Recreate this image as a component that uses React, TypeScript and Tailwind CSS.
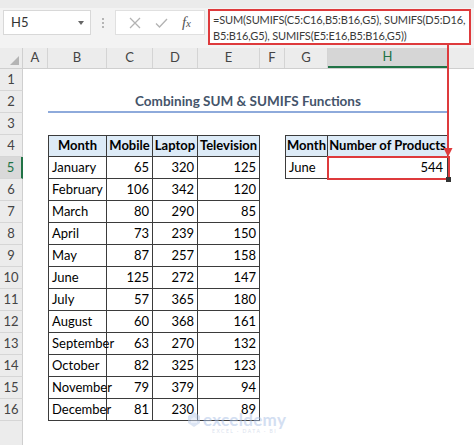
import React from 'react';

type Row = [string, number, number, number];

const data: Row[] = [
  ['January', 65, 320, 125],
  ['February', 106, 342, 120],
  ['March', 80, 290, 85],
  ['April', 73, 239, 150],
  ['May', 87, 257, 158],
  ['June', 125, 272, 147],
  ['July', 57, 365, 180],
  ['August', 60, 368, 161],
  ['September', 63, 270, 132],
  ['October', 82, 325, 123],
  ['November', 79, 379, 94],
  ['December', 81, 230, 89],
];

// column widths (A..H), the rest of the row is column I
const W = {
  A: 'w-[25px]',
  B: 'w-[59px]',
  C: 'w-[46px]',
  D: 'w-[45px]',
  E: 'w-[62px]',
  F: 'w-[25px]',
  G: 'w-[43px]',
  H: 'w-[120px]',
};

const colHeaders: { key: string; w: string }[] = [
  { key: 'A', w: W.A },
  { key: 'B', w: W.B },
  { key: 'C', w: W.C },
  { key: 'D', w: W.D },
  { key: 'E', w: W.E },
  { key: 'F', w: W.F },
  { key: 'G', w: W.G },
  { key: 'H', w: W.H },
];

const border = 'border-r border-b border-[#3b3b3b]';

function RowHeader({ n }: { n: number }) {
  const selected = n === 5;
  return (
    <div
      className={`w-[23px] shrink-0 flex items-center justify-center border-b border-[#d6d6d6] text-[13px] ${
        selected
          ? 'bg-[#d9d9d9] border-r-2 border-r-[#217346] text-[#217346]'
          : 'bg-[#ececec] border-r border-r-[#cfcfcf] text-[#444]'
      }`}
    >
      {n}
    </div>
  );
}

function Blank({ w }: { w: string }) {
  return <div className={`${w} shrink-0`} />;
}

function SheetRow({ n, children }: { n: number; children?: React.ReactNode }) {
  return (
    <div className="flex h-[22px]">
      <RowHeader n={n} />
      <Blank w={W.A} />
      {children}
    </div>
  );
}

export default function App() {
  return (
    <div
      className="relative w-[474px] h-[445px] overflow-hidden bg-white text-black"
      style={{ fontFamily: 'Lato, "Liberation Sans", sans-serif' }}
    >
      {/* formula bar */}
      <div className="h-[48px] bg-[#f3f3f3] border-t-[8px] border-[#ebebeb] flex items-start pt-[1px]">
        <div className="ml-[3px] mt-[1px] w-[88px] h-[25px] bg-white border border-[#d8d8d8] flex items-center justify-between pl-[7px] pr-[6px]">
          <span className="text-[13px] text-[#333]">H5</span>
          <span className="w-0 h-0 border-l-[3px] border-r-[3px] border-t-[4px] border-l-transparent border-r-transparent border-t-[#666]" />
        </div>
        <div className="w-[24px] h-[25px] flex flex-col items-center justify-center gap-[2px] mt-[1px]">
          <span className="w-[2px] h-[2px] bg-[#b5b5b5]" />
          <span className="w-[2px] h-[2px] bg-[#b5b5b5]" />
          <span className="w-[2px] h-[2px] bg-[#b5b5b5]" />
        </div>
        <div className="w-[90px] h-[25px] mt-[1px] bg-white border border-[#e0e0e0] flex items-center justify-around px-[6px]">
          <svg width="12" height="12" viewBox="0 0 12 12">
            <path d="M1 1 L11 11 M11 1 L1 11" stroke="#b3b3b3" strokeWidth="1.3" fill="none" />
          </svg>
          <svg width="13" height="12" viewBox="0 0 13 12">
            <path d="M1 6.5 L4.5 10 L12 2" stroke="#b3b3b3" strokeWidth="1.3" fill="none" />
          </svg>
          <span
            className="text-[15px] italic text-[#555] leading-none"
            style={{ fontFamily: '"Liberation Serif", serif' }}
          >
            f<span className="text-[11px]">x</span>
          </span>
        </div>
        <div className="ml-[3px] w-[263px] h-[36px] bg-white border-2 border-[#de3a3c] pl-[3px] pt-[1px] text-[11px] leading-[16px] text-[#3a3a3a] tracking-[-0.15px] overflow-hidden">
          <div className="whitespace-nowrap">=SUM(SUMIFS(C5:C16,B5:B16,G5), SUMIFS(D5:D16,</div>
          <div className="whitespace-nowrap">B5:B16,G5), SUMIFS(E5:E16,B5:B16,G5))</div>
        </div>
      </div>

      {/* column headers */}
      <div className="flex h-[21px] bg-[#ececec] text-[13px] text-[#444] border-b border-[#cfcfcf]">
        <div className="w-[23px] shrink-0 relative border-r border-[#cfcfcf]">
          <span
            className="absolute right-[3px] bottom-[3px] w-0 h-0"
            style={{ borderBottom: '9px solid #b4b4b4', borderLeft: '9px solid transparent' }}
          />
        </div>
        {colHeaders.map((c) => (
          <div
            key={c.key}
            className={`${c.w} shrink-0 flex items-center justify-center border-r border-[#d4d4d4] ${
              c.key === 'H' ? 'bg-[#d6d6d6] border-b-2 border-b-[#217346] text-[#217346]' : ''
            }`}
          >
            {c.key}
          </div>
        ))}
        <div className="flex-1" />
      </div>

      {/* sheet */}
      <div className="text-[13px]">
        <SheetRow n={1} />
        <SheetRow n={2}>
          <div className="w-[400px] shrink-0 flex items-center justify-center border-b-2 border-[#8eaadb] font-bold text-[13.5px] text-[#44546a]">
            Combining SUM &amp; SUMIFS Functions
          </div>
        </SheetRow>
        <SheetRow n={3} />
        <SheetRow n={4}>
          {[
            ['Month', W.B, 'border-l'],
            ['Mobile', W.C, ''],
            ['Laptop', W.D, ''],
            ['Television', W.E, ''],
          ].map(([t, w, extra]) => (
            <div
              key={t}
              className={`${w} shrink-0 flex items-center justify-center bg-[#ddebf7] font-bold border-t ${border} ${extra}`}
            >
              {t}
            </div>
          ))}
          <Blank w={W.F} />
          <div className={`${W.G} shrink-0 flex items-center justify-center bg-[#ddebf7] font-bold border-t border-l ${border}`}>
            Month
          </div>
          <div className={`${W.H} shrink-0 flex items-center justify-center bg-[#ddebf7] font-bold border-t ${border} whitespace-nowrap`}>
            Number of Products
          </div>
        </SheetRow>
        {data.map((r, i) => (
          <SheetRow key={r[0]} n={i + 5}>
            <div className={`${W.B} shrink-0 flex items-center pl-[3px] border-l ${border}`}>{r[0]}</div>
            <div className={`${W.C} shrink-0 flex items-center justify-end pr-[3px] ${border}`}>{r[1]}</div>
            <div className={`${W.D} shrink-0 flex items-center justify-end pr-[3px] ${border}`}>{r[2]}</div>
            <div className={`${W.E} shrink-0 flex items-center justify-end pr-[3px] ${border}`}>{r[3]}</div>
            {i === 0 && (
              <>
                <Blank w={W.F} />
                <div className={`${W.G} shrink-0 flex items-center pl-[3px] border-l ${border}`}>June</div>
                <div className={`${W.H} shrink-0 relative flex items-center justify-end pr-[4px] ${border}`}>
                  544
                  <span className="absolute -left-[1px] -top-[1px] -right-[3px] -bottom-[2px] border-2 border-[#de3a3c]" />
                  <span className="absolute -right-[4px] -bottom-[4px] w-[5px] h-[5px] bg-[#333]" />
                </div>
              </>
            )}
          </SheetRow>
        ))}
        <div className="flex h-[24px]">
          <div className="w-[23px] shrink-0 bg-[#ececec] border-r border-[#cfcfcf]" />
        </div>
      </div>

      {/* red arrow from formula bar down to H5 */}
      <svg className="absolute left-[441px] top-[44px]" width="14" height="114" viewBox="0 0 14 114">
        <line x1="7" y1="0" x2="7" y2="106" stroke="#de3a3c" strokeWidth="2" />
        <path d="M2.5 104 L11.5 104 L7 113 Z" fill="#de3a3c" />
      </svg>

      {/* watermark */}
      <div className="absolute left-[187px] top-[411px] flex items-start gap-[2px] opacity-50 pointer-events-none">
        <svg width="14" height="17" viewBox="0 0 14 17">
          <path d="M7 1 L13 5 L13 12 L7 16 L1 12 L1 5 Z" fill="#b9cbe8" />
          <path d="M4 8 L7 6 L10 8 L10 12 L4 12 Z" fill="#d8e3f4" />
        </svg>
        <div className="flex flex-col items-center leading-none">
          <span className="text-[17px] font-bold text-[#a9c0e6] tracking-[0.3px] leading-[17px]">exceldemy</span>
          <span className="text-[5px] text-[#b5c5de] tracking-[1.5px] mt-[1px]">EXCEL · DATA · BI</span>
        </div>
      </div>
    </div>
  );
}
